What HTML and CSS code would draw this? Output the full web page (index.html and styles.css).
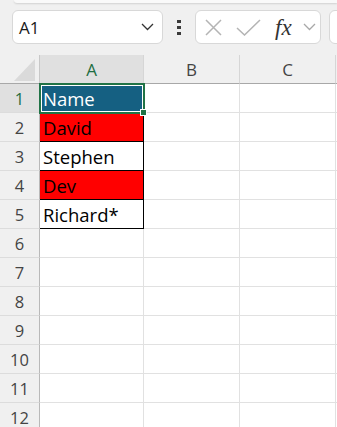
FILE: index.html
```html
<!DOCTYPE html>
<html lang="en">

<head>
	<meta charset="UTF-8">
	<meta name="viewport" content="width=device-width, initial-scale=1.0">
	<title>Book1</title>
	<link rel="stylesheet" href="styles.css">
</head>

<body>
	<div class="app">
		<div class="top">
			<div class="ribbon-edge"></div>
			<div class="toolbar">
				<div class="name-box">
					<span>A1</span>
					<svg width="13" height="8" viewBox="0 0 13 8"><polyline points="1,1 6.5,6.5 12,1" fill="none" stroke="#333" stroke-width="1.3"/></svg>
				</div>
				<div class="more"><i></i><i></i><i></i></div>
				<div class="fx-box">
					<svg class="cancel" width="19" height="19" viewBox="0 0 19 19"><path d="M2 2 L17 17 M17 2 L2 17" stroke="#b4b4b4" stroke-width="1.5" fill="none"/></svg>
					<svg class="enter" width="25" height="17" viewBox="0 0 25 17"><polyline points="1,9 8.5,16 24,1" fill="none" stroke="#b4b4b4" stroke-width="1.5"/></svg>
					<span class="fx">fx</span>
					<svg class="fx-drop" width="13" height="8" viewBox="0 0 13 8"><polyline points="1,1 6.5,6.5 12,1" fill="none" stroke="#a8a8a8" stroke-width="1.3"/></svg>
				</div>
				<div class="formula-bar"></div>
			</div>
		</div>

		<div class="sheet">
			<div class="corner"><i></i></div>
			<div class="cell col-head active">A</div>
			<div class="cell col-head">B</div>
			<div class="cell col-head">C</div>
			<div class="cell col-head"></div>

			<div class="cell row-head active">1</div>
			<div class="cell boxed a1">Name</div>
			<div class="cell"></div>
			<div class="cell"></div>
			<div class="cell"></div>

			<div class="cell row-head">2</div>
			<div class="cell boxed red">David</div>
			<div class="cell"></div>
			<div class="cell"></div>
			<div class="cell"></div>

			<div class="cell row-head">3</div>
			<div class="cell boxed">Stephen</div>
			<div class="cell"></div>
			<div class="cell"></div>
			<div class="cell"></div>

			<div class="cell row-head">4</div>
			<div class="cell boxed red">Dev</div>
			<div class="cell"></div>
			<div class="cell"></div>
			<div class="cell"></div>

			<div class="cell row-head">5</div>
			<div class="cell boxed">Richard*</div>
			<div class="cell"></div>
			<div class="cell"></div>
			<div class="cell"></div>

			<div class="cell row-head">6</div>
			<div class="cell"></div>
			<div class="cell"></div>
			<div class="cell"></div>
			<div class="cell"></div>

			<div class="cell row-head">7</div>
			<div class="cell"></div>
			<div class="cell"></div>
			<div class="cell"></div>
			<div class="cell"></div>

			<div class="cell row-head">8</div>
			<div class="cell"></div>
			<div class="cell"></div>
			<div class="cell"></div>
			<div class="cell"></div>

			<div class="cell row-head">9</div>
			<div class="cell"></div>
			<div class="cell"></div>
			<div class="cell"></div>
			<div class="cell"></div>

			<div class="cell row-head">10</div>
			<div class="cell"></div>
			<div class="cell"></div>
			<div class="cell"></div>
			<div class="cell"></div>

			<div class="cell row-head">11</div>
			<div class="cell"></div>
			<div class="cell"></div>
			<div class="cell"></div>
			<div class="cell"></div>

			<div class="cell row-head">12</div>
			<div class="cell"></div>
			<div class="cell"></div>
			<div class="cell"></div>
			<div class="cell"></div>
		</div>
	</div>
</body>

</html>
```

FILE: styles.css
```css
body {
	margin: 0;
	background-color: #ffffff;
	font-family: 'Open Sans', 'DejaVu Sans', sans-serif;
	color: #000000;
}

.app {
	width: 337px;
	height: 427px;
	overflow: hidden;
}

/* name box + formula bar */
.top {
	height: 55px;
	background-color: #f0f0f0;
}

.ribbon-edge {
	height: 3px;
	margin-left: 14px;
	background-color: #f9f9f9;
	border-bottom-left-radius: 6px;
	box-shadow: 0 1px 2px rgba(0, 0, 0, 0.13);
}

.toolbar {
	display: flex;
	align-items: center;
	padding: 7px 0 0 12px;
	height: 34px;
}

.name-box {
	width: 151px;
	height: 34px;
	box-sizing: border-box;
	flex-shrink: 0;
	background-color: #ffffff;
	border: 1px solid #d8d8d8;
	border-radius: 6px;
	display: flex;
	align-items: center;
	justify-content: space-between;
	padding: 0 8px 0 6px;
	font-size: 17px;
	color: #1a1a1a;
}

.more {
	display: flex;
	flex-direction: column;
	gap: 3px;
	margin: 0 14px;
	flex-shrink: 0;
}

.more i {
	display: block;
	width: 4px;
	height: 3px;
	background-color: #3a3a3a;
}

.fx-box {
	width: 126px;
	height: 34px;
	box-sizing: border-box;
	flex-shrink: 0;
	background-color: #ffffff;
	border: 1px solid #d8d8d8;
	border-radius: 6px;
	display: flex;
	align-items: center;
	padding-left: 8px;
}

.fx-box svg {
	display: block;
	flex-shrink: 0;
}

.enter {
	margin-left: 13px;
}

.fx {
	margin-left: 14px;
	width: 20px;
	font-family: 'Liberation Serif', serif;
	font-style: italic;
	font-size: 23px;
	color: #333333;
	line-height: 1;
}

.fx-drop {
	margin-left: 8px;
}

.formula-bar {
	width: 60px;
	height: 34px;
	box-sizing: border-box;
	flex-shrink: 0;
	margin-left: 8px;
	background-color: #ffffff;
	border: 1px solid #d8d8d8;
	border-radius: 6px;
}

/* grid */
.sheet {
	display: grid;
	grid-template-columns: 40px 104px 96px 96px 40px;
	grid-auto-rows: 29px;
}

.cell {
	box-sizing: border-box;
	border-right: 1px solid #e1e1e1;
	border-bottom: 1px solid #e1e1e1;
	display: flex;
	align-items: center;
	padding-left: 3px;
	font-size: 18.5px;
	white-space: nowrap;
}

.corner {
	background-color: #f0f0f0;
	border-right: 1px solid #c8c8c8;
	border-bottom: 1px solid #a8a8a8;
	display: flex;
	justify-content: flex-end;
	align-items: flex-end;
	padding: 0 4px 2px 0;
}

.corner i {
	display: block;
	width: 21px;
	height: 22px;
	background-color: #dadada;
	clip-path: polygon(100% 0, 100% 100%, 0 100%);
}

.col-head {
	background-color: #f0f0f0;
	border-right-color: #d6d6d6;
	border-bottom-color: #a8a8a8;
	justify-content: center;
	padding-left: 0;
	font-size: 17px;
	color: #444444;
}

.row-head {
	background-color: #f0f0f0;
	border-right-color: #b9b9b9;
	border-bottom-color: #dcdcdc;
	justify-content: center;
	padding-left: 0;
	font-size: 16.5px;
	color: #444444;
}

.col-head.active,
.row-head.active {
	background-color: #e0e0e0;
	color: #1e6e42;
}

.boxed {
	border-right-color: #000000;
	border-bottom-color: #000000;
}

.red {
	background-color: #ff0000;
}

.a1 {
	position: relative;
	background-color: #156082;
	color: #ffffff;
}

/* active cell frame and fill handle */
.a1::after {
	content: "";
	position: absolute;
	left: -1px;
	top: -1px;
	right: -2px;
	bottom: -2px;
	border: 2px solid #217346;
	box-shadow: inset 0 0 0 1px #ffffff;
	z-index: 1;
}

.a1::before {
	content: "";
	position: absolute;
	right: -4px;
	bottom: -4px;
	width: 5px;
	height: 5px;
	border: 1px solid #ffffff;
	background-color: #217346;
	z-index: 2;
}
```
